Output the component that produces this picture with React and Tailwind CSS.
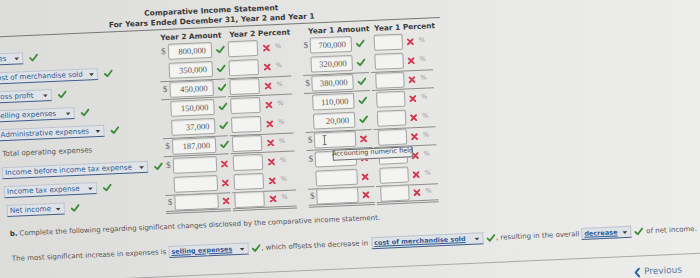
import React from 'react';

const rows = [
  { label: 'Sales', box: 'w-[39px] ml-[-12px]', d: true, a2: '800,000', a2ok: true, a1: '700,000', a1ok: true },
  { label: 'Cost of merchandise sold', box: 'w-[109px] ml-[-8px]', a2: '350,000', a2ok: true, a1: '320,000', a1ok: true },
  { label: 'Gross profit', box: 'w-[63px] ml-[-9px]', d: true, top: true, bottom: true, a2: '450,000', a2ok: true, a1: '380,000', a1ok: true },
  { label: 'Selling expenses', box: 'w-[82px] ml-[-6px]', a2: '150,000', a2ok: true, a1: '110,000', a1ok: true },
  { label: 'Administrative expenses', box: 'w-[107px] ml-[-2px]', a2: '37,000', a2ok: true, a1: '20,000', a1ok: true },
  { label: 'Total operating expenses', plain: true, box: 'ml-[2px]', d: true, top: true, bottom: true, a2: '187,000', a2ok: true, a1: '', a1ok: false, cursor: true },
  { label: 'Income before income tax expense', box: 'w-[146px] ml-[1px]', d: true, a2: '', a2ok: false, a1: '', a1ok: false, tip: true },
  { label: 'Income tax expense', box: 'w-[93px] ml-[2px]', a2: '', a2ok: false, a1: '', a1ok: false },
  { label: 'Net income', box: 'w-[58px] ml-[4px]', d: true, top: true, dbl: true, a2: '', a2ok: false, a1: '', a1ok: false },
];

function Check() {
  return (
    <svg width="9" height="8" viewBox="0 0 9 8" className="shrink-0">
      <path d="M1 4.3 L3.4 6.7 L8 1.2" fill="none" stroke="#3f8f3a" strokeWidth="1.9" strokeLinecap="round" strokeLinejoin="round" />
    </svg>
  );
}

function Cross() {
  return (
    <svg width="7" height="7" viewBox="0 0 7 7" className="shrink-0">
      <path d="M1 1 L6 6 M6 1 L1 6" stroke="#d8364e" strokeWidth="1.9" strokeLinecap="round" />
    </svg>
  );
}

function Arrow() {
  return (
    <svg width="5" height="3" viewBox="0 0 5 3" className="shrink-0">
      <path d="M0 0 H5 L2.5 3 Z" fill="#444" />
    </svg>
  );
}

function Drop({ label, className, bold }) {
  return (
    <div className={'flex h-[12px] shrink-0 items-center justify-between border border-[#bcc4cf] border-b-[#3f5c8a] bg-[#dfe3e8] pl-[2px] pr-[3px] text-[#2f5a94] ' + className}>
      <span className={'whitespace-nowrap leading-none ' + (bold ? 'font-bold underline' : '')}>{label}</span>
      <Arrow />
    </div>
  );
}

function Box({ value, w, cursor }) {
  return (
    <div className={"flex h-[16px] shrink-0 items-center justify-end rounded-[2px] border border-[#a3a3a3] bg-[#f3f3f1] pr-[5px] font-['Liberation_Serif',serif] text-[8.5px] text-[#555] shadow-[inset_0_1px_1px_rgba(0,0,0,0.1)] " + w}>
      {cursor ? (
        <svg width="5" height="10" viewBox="0 0 5 10" className="mr-auto ml-[7px]">
          <path d="M0.5 0.5 H4.5 M2.5 0.5 V9.5 M0.5 9.5 H4.5" stroke="#555" strokeWidth="0.8" fill="none" />
        </svg>
      ) : (
        value
      )}
    </div>
  );
}

function Dollar({ show, w }) {
  return (
    <span className={"shrink-0 text-center font-['Liberation_Serif',serif] text-[9px] text-[#6a6a6a] " + w}>
      {show ? '$' : ''}
    </span>
  );
}

function Pct() {
  return <span className="ml-[5px] text-[6.5px] text-[#999]">%</span>;
}

function lines(r) {
  let c = '';
  if (r.top) c += ' border-t border-t-[#8c8c8c]';
  if (r.bottom) c += ' border-b border-b-[#8c8c8c]';
  if (r.dbl) c += ' border-b-[3px] border-double border-b-[#8c8c8c]';
  return c;
}

function Row({ r }) {
  const l = lines(r);
  return (
    <div className="flex h-[19px] items-stretch">
      <div className="flex w-[163px] shrink-0 items-center gap-[6px]">
        {r.plain ? (
          <span className={'whitespace-nowrap text-[7.2px] text-[#555] ' + r.box}>{r.label}</span>
        ) : (
          <>
            <Drop label={r.label} className={'text-[7.2px] ' + r.box} />
            <Check />
          </>
        )}
      </div>

      <div className={'mr-[2px] flex w-[65px] shrink-0 items-center' + l}>
        <Dollar show={r.d} w="w-[9px]" />
        <Box value={r.a2} w="w-[44px]" />
        <span className="ml-[4px] flex">{r.a2ok ? <Check /> : <Cross />}</span>
      </div>

      <div className={'mr-[12px] flex w-[64px] shrink-0 items-center pl-[2px]' + l}>
        <Box value="" w="w-[30px]" />
        <span className="ml-[5px] flex"><Cross /></span>
        <Pct />
      </div>

      <div className={'relative mr-[2px] flex w-[66px] shrink-0 items-center' + l}>
        <Dollar show={r.d} w="w-[8px]" />
        <Box value={r.a1} w="w-[42px]" cursor={r.cursor} />
        <span className="ml-[4px] flex">{r.a1ok ? <Check /> : <Cross />}</span>
        {r.tip && (
          <div className="absolute left-[26px] top-[0px] z-10 flex h-[11px] w-[80px] items-center justify-center border border-[#6b6b6b] bg-[#ececea] text-[6.5px] whitespace-nowrap text-[#444]">
            Accounting numeric field
          </div>
        )}
      </div>

      <div className={'flex w-[62px] shrink-0 items-center pl-[4px]' + l}>
        <Box value="" w="w-[29px]" />
        <span className="ml-[4px] flex"><Cross /></span>
        <Pct />
      </div>
    </div>
  );
}

export default function App() {
  return (
    <div className="h-[278px] w-[700px] overflow-hidden bg-gradient-to-r from-[#dcdcda] via-[#e5e5e3] to-[#ededeb] font-['DejaVu_Sans',sans-serif]">
      <div className="h-[278px] w-[700px] rotate-[-2.5deg]">
        <div className="w-[434px] text-center text-[7.5px] font-bold leading-[10px] text-[#3a3a3a]">
          <div>Comparative Income Statement</div>
          <div>For Years Ended December 31, Year 2 and Year 1</div>
        </div>
        <div className="mt-[0.5px] w-[445px] border-b border-[#777]" />

        <div className="mt-[3px] flex h-[10px] items-center text-[7.4px] font-bold whitespace-nowrap text-[#3a3a3a]">
          <div className="w-[163px] shrink-0" />
          <div className="mr-[2px] w-[65px] shrink-0 pl-[2px]">Year 2 Amount</div>
          <div className="mr-[12px] w-[64px] shrink-0 pl-[4px]">Year 2 Percent</div>
          <div className="mr-[2px] w-[66px] shrink-0 pl-[7px]">Year 1 Amount</div>
          <div className="w-[62px] shrink-0 pl-[5px]">Year 1 Percent</div>
        </div>

        {rows.map((r) => (
          <Row key={r.label} r={r} />
        ))}

        <div className="mt-[8.5px] flex h-[10px] items-center pl-[6px] text-[7px] whitespace-nowrap text-[#555]">
          <span className="mr-[2px] font-bold text-[#333]">b.</span>
          <span>Complete the following regarding significant changes disclosed by the comparative income statement.</span>
        </div>

        <div className="mt-[14px] flex h-[12px] items-center pl-[7px] text-[7px] whitespace-nowrap text-[#555]">
          <span className="mr-[2px]">The most significant increase in expenses is</span>
          <Drop label="selling expenses" bold className="w-[80px] text-[6.5px]" />
          <span className="ml-[3px]"><Check /></span>
          <span className="ml-[1px]">, which offsets the decrease in</span>
          <Drop label="cost of merchandise sold" bold className="ml-[3px] w-[112px] text-[6.5px]" />
          <span className="ml-[3px]"><Check /></span>
          <span className="ml-[1px]">, resulting in the overall</span>
          <Drop label="decrease" bold className="ml-[2px] w-[50px] text-[6.5px]" />
          <span className="ml-[3px]"><Check /></span>
          <span className="ml-[3px]">of net income.</span>
        </div>

        <div className="mt-[18px] border-t border-[#a9a9a9]" />

        <div className="mt-[10px] flex h-[12px] items-center justify-end pr-[24px]">
          <svg width="6" height="10" viewBox="0 0 6 10" className="mr-[4px]">
            <path d="M5 1 L1.5 5 L5 9" fill="none" stroke="#2a64b0" strokeWidth="2" strokeLinecap="round" strokeLinejoin="round" />
          </svg>
          <span className="text-[9px] text-[#5a7aa8]">Previous</span>
        </div>
      </div>
    </div>
  );
}
